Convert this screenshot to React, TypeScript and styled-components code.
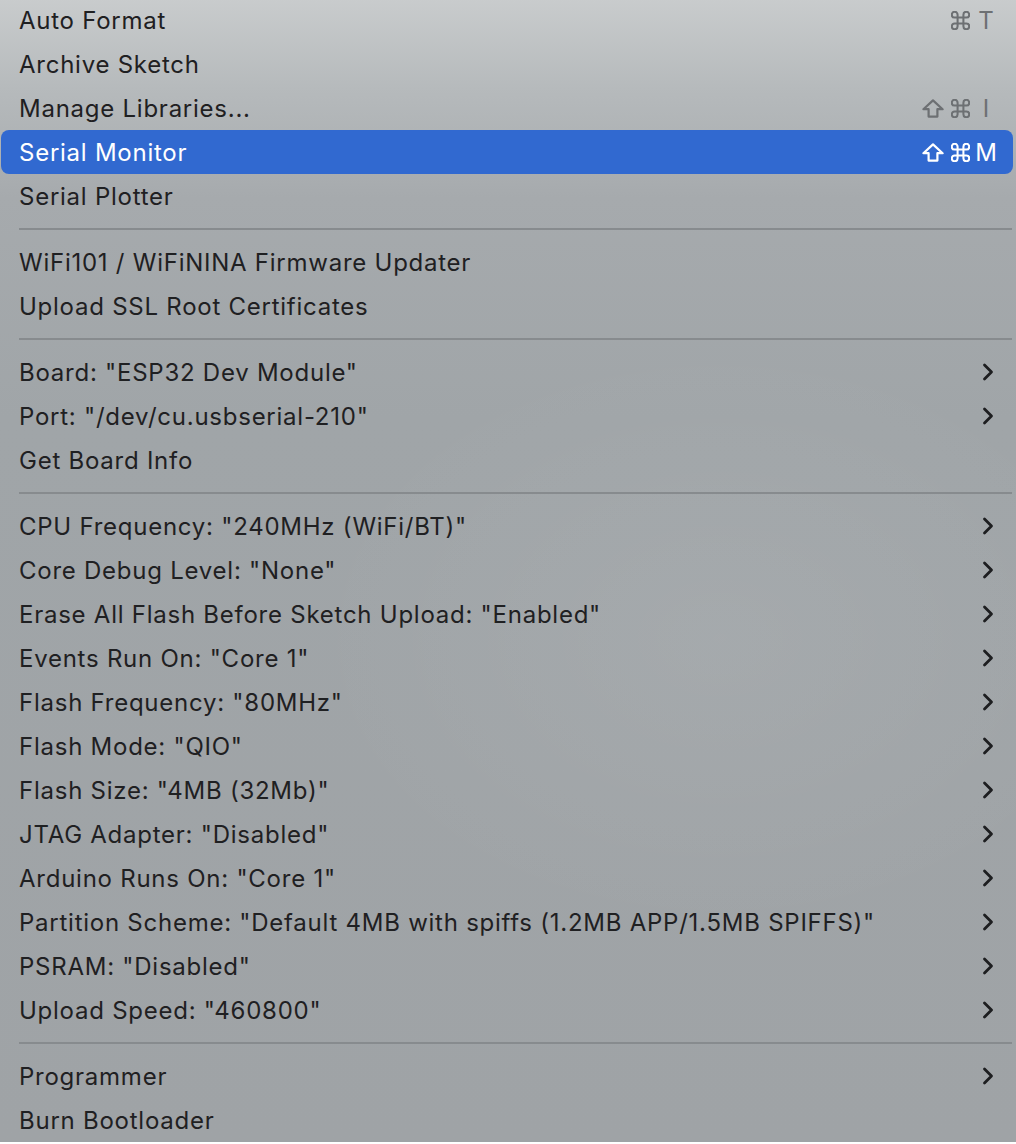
import React from 'react';
import styled, { createGlobalStyle } from 'styled-components';

const GlobalStyle = createGlobalStyle`
  html, body {
    margin: 0;
    padding: 0;
  }
  body {
    font-family: Inter, 'Noto Sans', 'Liberation Sans', sans-serif;
    -webkit-font-smoothing: antialiased;
  }
`;

type Entry =
  | { kind: 'item'; label: string; shift?: boolean; key?: string; submenu?: boolean; active?: boolean }
  | { kind: 'sep' };

const entries: Entry[] = [
  { kind: 'item', label: 'Auto Format', key: 'T' },
  { kind: 'item', label: 'Archive Sketch' },
  { kind: 'item', label: 'Manage Libraries...', shift: true, key: 'I' },
  { kind: 'item', label: 'Serial Monitor', shift: true, key: 'M', active: true },
  { kind: 'item', label: 'Serial Plotter' },
  { kind: 'sep' },
  { kind: 'item', label: 'WiFi101 / WiFiNINA Firmware Updater' },
  { kind: 'item', label: 'Upload SSL Root Certificates' },
  { kind: 'sep' },
  { kind: 'item', label: 'Board: "ESP32 Dev Module"', submenu: true },
  { kind: 'item', label: 'Port: "/dev/cu.usbserial-210"', submenu: true },
  { kind: 'item', label: 'Get Board Info' },
  { kind: 'sep' },
  { kind: 'item', label: 'CPU Frequency: "240MHz (WiFi/BT)"', submenu: true },
  { kind: 'item', label: 'Core Debug Level: "None"', submenu: true },
  { kind: 'item', label: 'Erase All Flash Before Sketch Upload: "Enabled"', submenu: true },
  { kind: 'item', label: 'Events Run On: "Core 1"', submenu: true },
  { kind: 'item', label: 'Flash Frequency: "80MHz"', submenu: true },
  { kind: 'item', label: 'Flash Mode: "QIO"', submenu: true },
  { kind: 'item', label: 'Flash Size: "4MB (32Mb)"', submenu: true },
  { kind: 'item', label: 'JTAG Adapter: "Disabled"', submenu: true },
  { kind: 'item', label: 'Arduino Runs On: "Core 1"', submenu: true },
  { kind: 'item', label: 'Partition Scheme: "Default 4MB with spiffs (1.2MB APP/1.5MB SPIFFS)"', submenu: true },
  { kind: 'item', label: 'PSRAM: "Disabled"', submenu: true },
  { kind: 'item', label: 'Upload Speed: "460800"', submenu: true },
  { kind: 'sep' },
  { kind: 'item', label: 'Programmer', submenu: true },
  { kind: 'item', label: 'Burn Bootloader' },
];

const Menu = styled.div`
  width: 1016px;
  height: 1144px;
  overflow: hidden;
  box-sizing: border-box;
  padding: 0 3px 0 1px;
  margin-top: -2px;
  background:
    radial-gradient(ellipse 420px 300px at 720px 640px, rgba(255, 255, 255, 0.06), transparent),
    linear-gradient(180deg, #c9cccd 0px, #b6babc 90px, #a6aaad 200px, #a0a5a8 420px, #9fa3a6 1144px);
  display: flex;
  flex-direction: column;
`;

const Row = styled.div<{ $active?: boolean }>`
  height: 44px;
  flex: none;
  display: flex;
  align-items: center;
  padding: 0 14px 0 18px;
  border-radius: 8px;
  font-size: 24px;
  letter-spacing: 0.75px;
  color: ${({ $active }) => ($active ? '#ffffff' : '#1f2022')};
  background: ${({ $active }) => ($active ? '#3169d0' : 'transparent')};
`;

const Label = styled.span`
  flex: 1;
  white-space: nowrap;
`;

const Shortcut = styled.span<{ $active?: boolean }>`
  display: flex;
  align-items: center;
  color: ${({ $active }) => ($active ? '#ffffff' : '#6d7073')};
`;

const ModIcon = styled.svg<{ $gap: number }>`
  display: block;
  margin-right: ${({ $gap }) => $gap}px;
`;

const Key = styled.span`
  width: 26px;
  text-align: center;
  letter-spacing: 0;
`;

const Chevron = styled.svg`
  width: 12px;
  height: 20px;
  margin-right: 5px;
`;

const Separator = styled.div`
  height: 22px;
  flex: none;
  display: flex;
  align-items: center;
  padding: 0 0 0 18px;

  &::after {
    content: '';
    flex: 1;
    height: 2px;
    margin-right: 1px;
    background: #878b8e;
  }
`;

const ShiftIcon = () => (
  <ModIcon $gap={7} width="22" height="19" viewBox="0 0 22 19">
    <path
      d="M11 1.4 L20.6 10.2 H15.4 V17.6 H6.6 V10.2 H1.4 Z"
      fill="none"
      stroke="currentColor"
      strokeWidth="2.2"
      strokeLinejoin="round"
    />
  </ModIcon>
);

const CommandIcon = () => (
  <ModIcon $gap={3} width="19" height="19" viewBox="2.2 2.2 19.6 19.6">
    <path
      d="M15 6v12a3 3 0 1 0 3-3H6a3 3 0 1 0 3 3V6a3 3 0 1 0-3 3h12a3 3 0 1 0-3-3"
      fill="none"
      stroke="currentColor"
      strokeWidth="2.1"
      strokeLinecap="round"
      strokeLinejoin="round"
    />
  </ModIcon>
);

export default function App() {
  return (
    <>
      <GlobalStyle />
      <Menu>
        {entries.map((e, i) =>
          e.kind === 'sep' ? (
            <Separator key={i} />
          ) : (
            <Row key={i} $active={e.active}>
              <Label>{e.label}</Label>
              {e.key && (
                <Shortcut $active={e.active}>
                  {e.shift && <ShiftIcon />}
                  <CommandIcon />
                  <Key>{e.key}</Key>
                </Shortcut>
              )}
              {e.submenu && (
                <Chevron viewBox="0 0 12 20">
                  <path
                    d="M2.5 3 L9.5 10 L2.5 17"
                    fill="none"
                    stroke="#1d1e20"
                    strokeWidth="2.8"
                    strokeLinecap="round"
                    strokeLinejoin="round"
                  />
                </Chevron>
              )}
            </Row>
          )
        )}
      </Menu>
    </>
  );
}
